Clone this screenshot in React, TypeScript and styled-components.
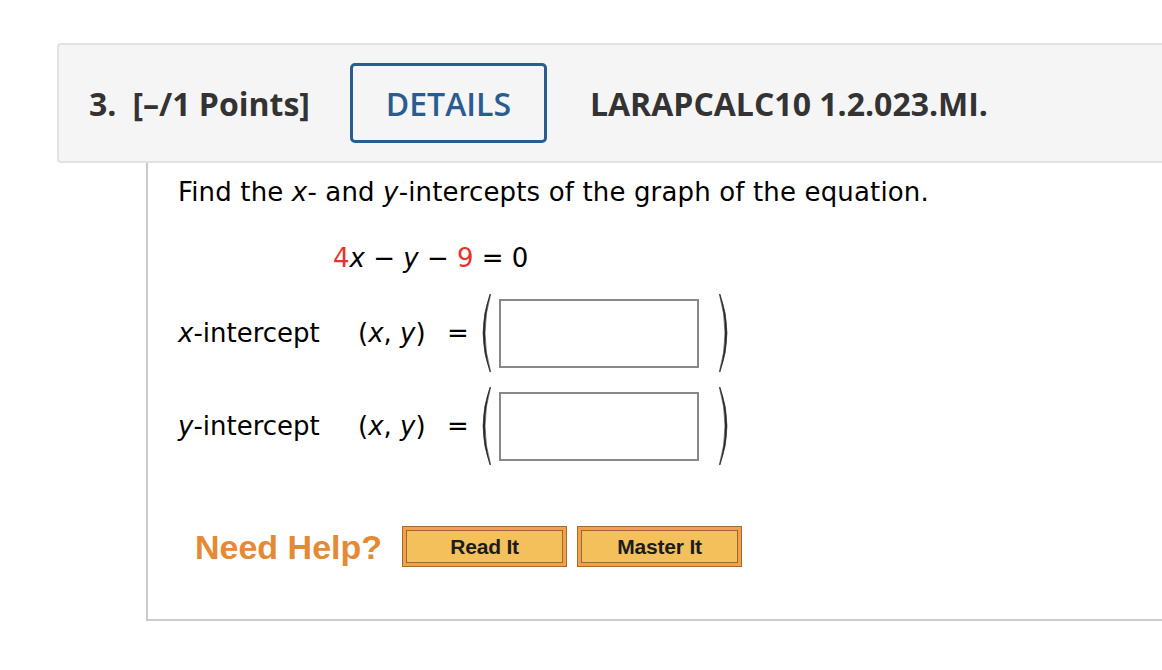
import React from "react";
import styled, { createGlobalStyle } from "styled-components";

const GlobalStyle = createGlobalStyle`
  html, body {
    margin: 0;
    padding: 0;
    background: #ffffff;
    overflow: hidden;
  }
`;

const Page = styled.div`
  width: 1162px;
  height: 670px;
  overflow: hidden;
  padding: 43px 0 0 57px;
  box-sizing: border-box;
`;

const Header = styled.div`
  display: flex;
  align-items: center;
  height: 120px;
  width: 1140px;
  box-sizing: border-box;
  background: #f5f5f5;
  border: 2px solid #e2e2e2;
  border-right: none;
  border-radius: 4px 0 0 4px;
  padding-left: 30px;
  font-family: "Open Sans", "Liberation Sans", sans-serif;
  font-weight: 700;
  font-size: 32px;
  color: #333333;
`;

const HeaderText = styled.span<{ $gap?: number }>`
  margin-left: ${(p) => p.$gap ?? 0}px;
  white-space: nowrap;
`;

const DetailsButton = styled.div`
  margin-left: 40px;
  width: 197px;
  height: 80px;
  box-sizing: border-box;
  border: 3px solid #2a5d8f;
  border-radius: 5px;
  display: flex;
  align-items: center;
  justify-content: center;
  color: #2a5d8f;
  font-weight: 600;
  font-size: 32px;
`;

const Body = styled.div`
  margin-left: 89px;
  height: 458px;
  box-sizing: border-box;
  border-left: 2px solid #cccccc;
  border-bottom: 2px solid #cccccc;
  padding: 12px 0 0 30px;
  font-family: "DejaVu Sans", Verdana, sans-serif;
  font-size: 26px;
  color: #000;
`;

const Prompt = styled.div`
  line-height: 34px;
  white-space: nowrap;
  letter-spacing: 0.15px;
`;

const Em = styled.i`
  font-style: italic;
`;

const Equation = styled.div`
  margin: 32px 0 0 155px;
  line-height: 34px;
  white-space: pre;
`;

const Red = styled.span`
  color: #e8332a;
`;

const AnswerRow = styled.div<{ $top: number }>`
  display: flex;
  align-items: center;
  margin-top: ${(p) => p.$top}px;
  height: 78px;
`;

const Label = styled.span`
  width: 180px;
  white-space: nowrap;
`;

const Pair = styled.span`
  width: 89px;
  white-space: nowrap;
`;

const Equals = styled.span`
  width: 31px;
`;

const AnswerBox = styled.div`
  width: 200px;
  height: 69px;
  box-sizing: border-box;
  border: 2px solid #888888;
  background: #fff;
  margin: 0 19px 0 7px;
`;

const HelpRow = styled.div`
  display: flex;
  align-items: center;
  margin: 61px 0 0 17px;
  gap: 10px;
`;

const HelpText = styled.span`
  font-family: "Liberation Sans", Arial, sans-serif;
  font-weight: 700;
  font-size: 34px;
  color: #e58a34;
  margin-right: 10px;
  line-height: 38px;
`;

const HelpButton = styled.div`
  width: 165px;
  height: 41px;
  box-sizing: border-box;
  border: 1px solid #a96b2c;
  background: #f3a04a;
  padding: 3px;
  display: flex;
`;

const HelpButtonInner = styled.div`
  flex: 1;
  border: 1px solid #9a6a35;
  background: #f3c05b;
  display: flex;
  align-items: center;
  justify-content: center;
  font-family: "Liberation Sans", Arial, sans-serif;
  font-weight: 700;
  font-size: 21px;
  color: #1c1c1c;
  letter-spacing: -0.2px;
`;

const Paren = ({ right }: { right?: boolean }) => (
  <svg width="14" height="80" viewBox="0 0 14 80">
    <path
      d={
        right
          ? "M2 1 Q16 40 2 79 L1.4 78.6 Q12.6 40 1.4 1.4 Z"
          : "M12 1 Q-2 40 12 79 L12.6 78.6 Q1.4 40 12.6 1.4 Z"
      }
      fill="#2a2a2a"
      stroke="#2a2a2a"
      strokeWidth="0.6"
    />
  </svg>
);

const Row = ({ v }: { v: string }) => (
  <>
    <Label>
      <Em>{v}</Em>-intercept
    </Label>
    <Pair>
      (<Em>x</Em>, <Em>y</Em>)
    </Pair>
    <Equals>=</Equals>
    <Paren />
    <AnswerBox />
    <Paren right />
  </>
);

export default function App() {
  return (
    <>
      <GlobalStyle />
      <Page>
        <Header>
          <HeaderText>3.</HeaderText>
          <HeaderText $gap={16}>[–/1 Points]</HeaderText>
          <DetailsButton>DETAILS</DetailsButton>
          <HeaderText $gap={43}>LARAPCALC10 1.2.023.MI.</HeaderText>
        </Header>
        <Body>
          <Prompt>
            Find the <Em>x</Em>- and <Em>y</Em>-intercepts of the graph of the equation.
          </Prompt>
          <Equation>
            <Red>4</Red>
            <Em>x</Em> − <Em>y</Em> − <Red>9</Red> = 0
          </Equation>
          <AnswerRow $top={19}>
            <Row v="x" />
          </AnswerRow>
          <AnswerRow $top={15}>
            <Row v="y" />
          </AnswerRow>
          <HelpRow>
            <HelpText>Need Help?</HelpText>
            <HelpButton>
              <HelpButtonInner>Read It</HelpButtonInner>
            </HelpButton>
            <HelpButton>
              <HelpButtonInner>Master It</HelpButtonInner>
            </HelpButton>
          </HelpRow>
        </Body>
      </Page>
    </>
  );
}
